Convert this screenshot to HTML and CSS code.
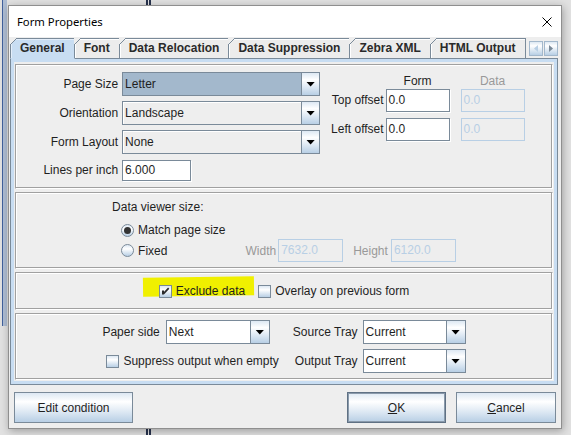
FILE: index.html
```html
<!DOCTYPE html>
<html lang="en">
<head>
<meta charset="utf-8">
<title>Form Properties</title>
<link rel="stylesheet" href="styles.css">
</head>
<body>
<div class="dialog">
  <div class="titlebar">
    <span class="title">Form Properties</span>
    <svg class="close" width="10" height="10" viewBox="0 0 10 10"><path d="M0.5 0.5L9.5 9.5M9.5 0.5L0.5 9.5" stroke="#000" stroke-width="1" fill="none"/></svg>
  </div>
  <div class="body">
    <div class="tabs">
      <div class="tab first selected">General</div>
      <div class="tab">Font</div>
      <div class="tab">Data Relocation</div>
      <div class="tab">Data Suppression</div>
      <div class="tab">Zebra XML</div>
      <div class="tab">HTML Output</div>
      <div class="tab-fill">
        <span class="sbtn"><span class="tri left"></span></span>
        <span class="sbtn"><span class="tri right"></span></span>
      </div>
    </div>
    <div class="tabpanel">
      <div class="inner">
        <div class="group g1">
          <div class="lgrid">
            <span class="lbl">Page Size</span>
            <div class="combo focus"><span class="val">Letter</span><span class="arr"><i class="down"></i></span></div>
            <span class="lbl">Orientation</span>
            <div class="combo"><span class="val">Landscape</span><span class="arr"><i class="down"></i></span></div>
            <span class="lbl">Form Layout</span>
            <div class="combo"><span class="val">None</span><span class="arr"><i class="down"></i></span></div>
            <span class="lbl">Lines per inch</span>
            <div class="field lpi">6.000</div>
          </div>
          <div class="rgrid">
            <span></span>
            <span class="hdr">Form</span>
            <span class="hdr dcol hdr-off">Data</span>
            <span class="lbl">Top offset</span>
            <div class="field">0.0</div>
            <div class="field off dcol">0.0</div>
            <span class="lbl">Left offset</span>
            <div class="field">0.0</div>
            <div class="field off dcol">0.0</div>
          </div>
        </div>
        <div class="group g2">
          <div class="dv">
            <span class="cap">Data viewer size:</span>
            <div class="ritem r2"><span class="radio on"></span><span>Match page size</span></div>
            <div class="ritem r3"><span class="radio"></span><span>Fixed</span></div>
            <span class="dis wl">Width</span>
            <div class="field off wf">7632.0</div>
            <span class="dis hlb">Height</span>
            <div class="field off hf">6120.0</div>
          </div>
        </div>
        <div class="group g3">
          <div class="chk marked"><span class="cb"><svg width="11" height="11" viewBox="0 0 11 11"><rect x="2" y="4.5" width="2" height="4" fill="#2b2b2b"/><path d="M8.7 2.1L3.6 7.6" stroke="#2b2b2b" stroke-width="1.7" fill="none"/></svg></span><span>Exclude data</span></div>
          <div class="chk"><span class="cb"></span><span>Overlay on previous form</span></div>
        </div>
        <div class="group g4">
          <div class="g4grid">
            <div class="ps"><span class="lbl">Paper side</span><div class="combo white ps-combo"><span class="val">Next</span><span class="arr"><i class="down"></i></span></div></div>
            <span class="lbl tray">Source Tray</span>
            <div class="combo white tray-combo"><span class="val">Current</span><span class="arr"><i class="down"></i></span></div>
            <div class="chk sup"><span class="cb"></span><span>Suppress output when empty</span></div>
            <span class="lbl tray">Output Tray</span>
            <div class="combo white tray-combo"><span class="val">Current</span><span class="arr"><i class="down"></i></span></div>
          </div>
        </div>
      </div>
    </div>
    <div class="buttons">
      <div class="btn edit">Edit condition</div>
      <div class="spacer"></div>
      <div class="btn ok"><span><u>O</u>K</span></div>
      <div class="btn cancel"><span><u>C</u>ancel</span></div>
    </div>
  </div>
</div>
</body>
</html>
```

FILE: styles.css
```css
* { box-sizing: border-box; }
html, body { margin: 0; padding: 0; }

body {
  width: 571px;
  height: 435px;
  overflow: hidden;
  padding: 5px 0 0 8px;
  font-family: "Liberation Sans", Arial, sans-serif;
  font-size: 12px;
  color: #1f1f1f;
  background-color: #e1e1e1;
  background-image:
    linear-gradient(#41619c, #41619c),
    linear-gradient(#aebdd3, #aebdd3),
    linear-gradient(#27324d, #27324d),
    linear-gradient(#27324d, #27324d);
  background-size: 1px 326px, 4px 326px, 2px 100%, 2px 100%;
  background-position: 2px 0, 3px 0, 146px 0, 149px 0;
  background-repeat: no-repeat;
}

.dialog {
  width: 554px;
  height: 424px;
  border: 1px solid #8f8f8f;
  background: #eeeeee;
  box-shadow: 1px 2px 8px rgba(0, 0, 0, 0.3);
  display: flex;
  flex-direction: column;
}

.titlebar {
  height: 31px;
  flex: none;
  background: #fff;
  display: flex;
  align-items: center;
  justify-content: space-between;
  padding: 0 9px 0 8px;
}
.title {
  font-family: "Noto Sans", "Open Sans", sans-serif;
  font-size: 11.3px;
  color: #000;
}
.close { display: block; }

.body {
  flex: 1;
  display: flex;
  flex-direction: column;
  padding: 1px 3px 0 1px;
}

/* tabs */
.tabs { display: flex; height: 21px; flex: none; }
.tab {
  position: relative;
  height: 21px;
  padding: 0 9px 0 9px;
  border-top: 1px solid #7a8a99;
  border-right: 1px solid #7a8a99;
  border-bottom: 1px solid #7a8a99;
  background: #ececec;
  box-shadow: inset 1px 1px 0 #fff;
  font-weight: bold;
  line-height: 19px;
  white-space: nowrap;
  color: #2a2a2a;
}
.tab.first { border-left: 1px solid #7a8a99; }
.tab.selected {
  background: #c8ddf2;
  border-bottom-color: #c8ddf2;
  box-shadow: inset 1px 1px 0 #e4eefa;
}
.tab::before {
  content: "";
  position: absolute;
  left: -1px;
  top: -1px;
  width: 7px;
  height: 7px;
  background: linear-gradient(to bottom right, #eeeeee 0, #eeeeee calc(50% - 0.6px), #7a8a99 calc(50% - 0.6px), #7a8a99 calc(50% + 0.6px), transparent calc(50% + 0.6px));
}
.tab-fill {
  flex: 1;
  border-bottom: 1px solid #7a8a99;
  display: flex;
  justify-content: flex-end;
  align-items: flex-start;
  padding-top: 3px;
  gap: 1px;
}
.sbtn {
  width: 14px;
  height: 15px;
  border: 1px solid #a3b8cc;
  background: linear-gradient(#dde8f3, #fff 30%, #b8cfe5);
  display: flex;
  align-items: center;
  justify-content: center;
}
.tri { display: block; width: 4px; height: 7px; background: #7a8a99; }
.tri.left { clip-path: polygon(100% 0, 100% 100%, 0 50%); background: #b8cfe5; }
.tri.right { clip-path: polygon(0 0, 0 100%, 100% 50%); }

/* tab panel */
.tabpanel {
  flex: none;
  height: 326px;
  border: 1px solid #7a8a99;
  border-top: none;
  background: #c8ddf2;
  padding: 3px;
}
.inner {
  height: 100%;
  background: #eeeeee;
  padding: 2px 1px 1px;
  display: flex;
  flex-direction: column;
  gap: 3px;
}
.group {
  flex: none;
  border-top: 1px solid #a0a0a0;
  border-left: 1px solid #a0a0a0;
  border-right: 1px solid #fff;
  border-bottom: 1px solid #fff;
  box-shadow: inset -1px -1px 0 #a0a0a0, inset 1px 1px 0 #fff;
  display: flex;
  justify-content: center;
}
.g1 { height: 125px; align-items: flex-start; padding-top: 7px; gap: 11px; }
.g2 { height: 77px; align-items: center; }
.g3 { height: 38px; align-items: center; gap: 13px; }
.g4 { height: 67px; align-items: center; }

.lbl { white-space: nowrap; }
.dis { color: #999; }

/* combos */
.combo {
  display: flex;
  height: 24px;
  border: 1px solid #7a8a99;
  background: #eeeeee;
  box-shadow: inset 1px 1px 0 #fff;
}
.combo .val {
  flex: 1;
  padding-left: 2px;
  line-height: 22px;
  white-space: nowrap;
}
.combo .arr {
  width: 18px;
  flex: none;
  border-left: 1px solid #7a8a99;
  background: linear-gradient(#dde8f3 0%, #fff 30%, #dde8f3 65%, #b8cfe5 100%);
  display: flex;
  align-items: center;
  justify-content: center;
}
.down {
  display: block;
  width: 9px;
  height: 5px;
  background: #000;
  clip-path: polygon(0 0, 100% 0, 50% 100%);
}
.combo.focus .val { background: #a3b8cc; }
.combo.white { background: #fff; }
.combo.white .arr { width: 19px; }

/* text fields */
.field {
  height: 23px;
  border: 1px solid #7a8a99;
  background: #fff;
  padding-left: 2px;
  line-height: 21px;
  box-shadow: 1px 1px 0 #fff;
  white-space: nowrap;
}
.field.off {
  border-color: #b8cfe5;
  background: #eeeeee;
  color: #b8cfe5;
  box-shadow: none;
}

/* section 1 */
.lgrid {
  display: grid;
  grid-template-columns: auto 198px;
  grid-template-rows: 24px 24px 24px 22px;
  column-gap: 4px;
  row-gap: 5px;
  align-items: center;
}
.lgrid .lbl { justify-self: end; }
.lpi { width: 69px; height: 21px; line-height: 19px; align-self: end; }

.rgrid {
  display: grid;
  grid-template-columns: auto 64px 75px;
  grid-template-rows: 17px 23px 29px;
  align-items: end;
}
.rgrid .lbl { justify-self: end; height: 23px; line-height: 23px; padding-right: 2px; }
.rgrid .hdr { align-self: center; text-align: center; }
.rgrid .hdr-off { color: #999; }
.rgrid .dcol { justify-self: end; width: 64px; }

/* section 2 */
.dv {
  display: grid;
  grid-template-columns: repeat(5, auto);
  grid-template-rows: 15px 21px 23px;
  row-gap: 2px;
  align-items: center;
}
.cap { grid-column: 1; grid-row: 1; }
.ritem { display: flex; align-items: center; gap: 4px; margin-left: 9px; grid-column: 1; }
.r2 { grid-row: 2; align-self: end; }
.r3 { grid-row: 3; }
.wl { grid-column: 2; grid-row: 3; margin-left: 20px; }
.wf { grid-column: 3; grid-row: 3; width: 65px; margin-left: 2px; }
.hlb { grid-column: 4; grid-row: 3; margin-left: 10px; }
.hf { grid-column: 5; grid-row: 3; width: 65px; margin-left: 3px; }

.radio {
  width: 13px;
  height: 13px;
  flex: none;
  border-radius: 50%;
  border: 1px solid #7a8a99;
  background: linear-gradient(#dde8f3, #fff 35%, #b8cfe5);
  display: flex;
  align-items: center;
  justify-content: center;
}
.radio.on::after {
  content: "";
  width: 7px;
  height: 7px;
  border-radius: 50%;
  background: #333;
}

/* checkboxes */
.chk { display: flex; align-items: center; gap: 4px; white-space: nowrap; }
.cb {
  width: 13px;
  height: 13px;
  flex: none;
  border: 1px solid #7a8a99;
  background: linear-gradient(#dde8f3, #fff 35%, #b8cfe5);
}
.cb svg { display: block; }
.marked { position: relative; z-index: 0; }
.marked::before {
  content: "";
  position: absolute;
  z-index: -1;
  left: -16px;
  right: -9px;
  top: -7px;
  bottom: 2px;
  background: #f0f000;
  transform: rotate(-0.8deg);
}

/* section 4 */
.g4grid {
  display: grid;
  grid-template-columns: auto auto auto;
  grid-template-rows: 24px 24px;
  row-gap: 5px;
  align-items: center;
}
.ps { display: flex; align-items: center; gap: 6px; }
.ps-combo { width: 104px; }
.sup { margin-left: 4px; }
.tray { justify-self: end; padding-left: 14px; padding-right: 5px; }
.tray-combo { width: 103px; }

/* buttons */
.buttons {
  display: flex;
  flex: none;
  height: 31px;
  margin-top: 7px;
  padding: 0 2px 0 4px;
}
.btn {
  height: 31px;
  border: 1px solid #7a8a99;
  background: linear-gradient(#dde8f3 0%, #fff 30%, #dde8f3 65%, #b8cfe5 100%);
  display: flex;
  align-items: center;
  justify-content: center;
  white-space: nowrap;
}
.edit { width: 119px; }
.spacer { flex: 1; }
.ok {
  width: 99px;
  margin-right: 10px;
  border-color: #5f7184;
  box-shadow: inset 0 0 0 1px #8a9aab;
}
.cancel { width: 100px; }
```
